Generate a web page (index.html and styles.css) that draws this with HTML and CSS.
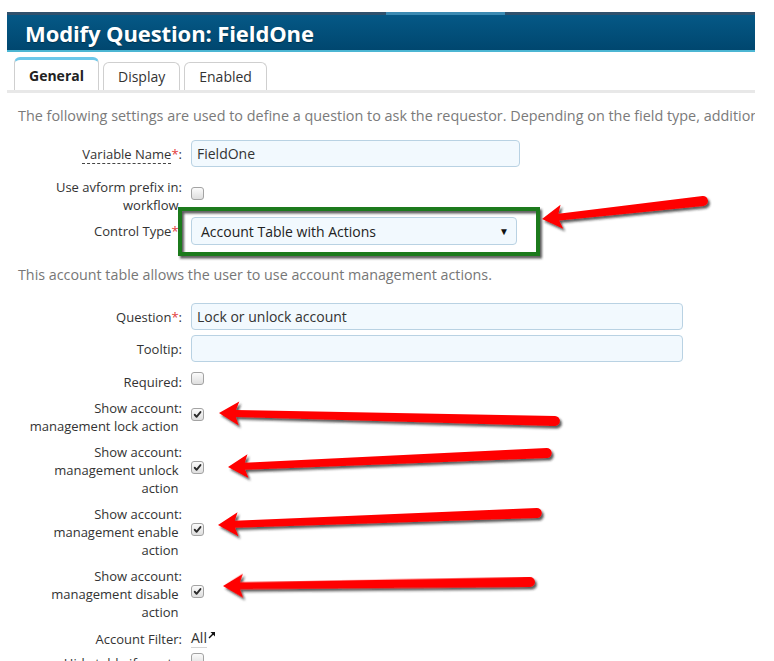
FILE: index.html
```html
<!DOCTYPE html>
<html lang="en">
<head>
<meta charset="utf-8">
<title>Modify Question: FieldOne</title>
<link rel="stylesheet" href="styles.css">
</head>
<body>
<div class="page">
  <div class="header"><h1 class="title">Modify Question: FieldOne</h1></div>
  <div class="tabs">
    <div class="tab tab-active">General</div>
    <div class="tab">Display</div>
    <div class="tab">Enabled</div>
  </div>
  <div class="content">
    <p class="intro">The following settings are used to define a question to ask the requestor. Depending on the field type, additional settings may be available.</p>
    <div class="form">
      <div class="row">
        <label class="lbl"><span class="lbl-text"><span class="dashed">Variable Name</span><span class="req">*</span></span><span class="colon">:</span></label>
        <div class="input input-short">FieldOne</div>
      </div>
      <div class="row row-avform">
        <label class="lbl"><span class="lbl-text">Use avform prefix in workflow</span><span class="colon">:</span></label>
        <span class="cb"></span>
      </div>
      <div class="row row-control">
        <label class="lbl"><span class="lbl-text">Control Type<span class="req">*</span></span><span class="colon">:</span></label>
        <div class="select"><span>Account Table with Actions</span><span class="caret">&#9660;</span></div>
      </div>
      <p class="desc">This account table allows the user to use account management actions.</p>
      <div class="row row-question">
        <label class="lbl"><span class="lbl-text">Question<span class="req">*</span></span><span class="colon">:</span></label>
        <div class="input input-long">Lock or unlock account</div>
      </div>
      <div class="row row-tooltip">
        <label class="lbl"><span class="lbl-text">Tooltip</span><span class="colon">:</span></label>
        <div class="input input-long"></div>
      </div>
      <div class="row row-required">
        <label class="lbl"><span class="lbl-text">Required</span><span class="colon">:</span></label>
        <span class="cb"></span>
      </div>
      <div class="row">
        <label class="lbl"><span class="lbl-text">Show account management lock action</span><span class="colon">:</span></label>
        <span class="cb cb-on"><svg viewBox="0 0 13 13" width="13" height="13"><path d="M3.2 6.8 L5.4 9.2 L10 3.6" fill="none" stroke="#2b2b2b" stroke-width="2.2" stroke-linecap="round" stroke-linejoin="round"/></svg></span>
      </div>
      <div class="row">
        <label class="lbl"><span class="lbl-text">Show account management unlock action</span><span class="colon">:</span></label>
        <span class="cb cb-on"><svg viewBox="0 0 13 13" width="13" height="13"><path d="M3.2 6.8 L5.4 9.2 L10 3.6" fill="none" stroke="#2b2b2b" stroke-width="2.2" stroke-linecap="round" stroke-linejoin="round"/></svg></span>
      </div>
      <div class="row">
        <label class="lbl"><span class="lbl-text">Show account management enable action</span><span class="colon">:</span></label>
        <span class="cb cb-on"><svg viewBox="0 0 13 13" width="13" height="13"><path d="M3.2 6.8 L5.4 9.2 L10 3.6" fill="none" stroke="#2b2b2b" stroke-width="2.2" stroke-linecap="round" stroke-linejoin="round"/></svg></span>
      </div>
      <div class="row">
        <label class="lbl"><span class="lbl-text">Show account management disable action</span><span class="colon">:</span></label>
        <span class="cb cb-on"><svg viewBox="0 0 13 13" width="13" height="13"><path d="M3.2 6.8 L5.4 9.2 L10 3.6" fill="none" stroke="#2b2b2b" stroke-width="2.2" stroke-linecap="round" stroke-linejoin="round"/></svg></span>
      </div>
      <div class="row">
        <label class="lbl"><span class="lbl-text">Account Filter</span><span class="colon">:</span></label>
        <span class="filter"><span class="link">All</span><svg class="ext" viewBox="0 0 8 8" width="8" height="8"><path d="M1 7 L6 2" stroke="#111" stroke-width="1.5"/><path d="M2.5 1 H7 V5.5 Z" fill="#111"/></svg></span>
      </div>
      <div class="row row-hide">
        <label class="lbl"><span class="lbl-text">Hide table if empty</span><span class="colon">:</span></label>
        <span class="cb"></span>
      </div>
    </div>
  </div>
</div>
<svg class="overlay" width="774" height="661" viewBox="0 0 774 661">
  <defs>
    <filter id="sh" x="-20%" y="-60%" width="140%" height="220%">
      <feDropShadow dx="2" dy="2.5" stdDeviation="1.3" flood-color="#222" flood-opacity="0.75"/>
    </filter>
  </defs>
  <rect x="180" y="209" width="358" height="45" fill="none" stroke="#1c7a1c" stroke-width="4" filter="url(#sh)"/>
  <g fill="#ff0000" filter="url(#sh)">
    <path transform="translate(542 219) rotate(-6.38)" d="M0,0 L20,-12 L17,-3.5 L162,-5 A5,5 0 0 1 162,5 L17,3.5 L20,12 Z"/>
    <path transform="translate(219 413) rotate(1.36)" d="M0,0 L20,-12 L17,-3.5 L336,-5 A5,5 0 0 1 336,5 L17,3.5 L20,12 Z"/>
    <path transform="translate(228 467) rotate(-2.51)" d="M0,0 L20,-12 L17,-3.5 L319,-5 A5,5 0 0 1 319,5 L17,3.5 L20,12 Z"/>
    <path transform="translate(218 525) rotate(-2.15)" d="M0,0 L20,-12 L17,-3.5 L319,-5 A5,5 0 0 1 319,5 L17,3.5 L20,12 Z"/>
    <path transform="translate(223 586) rotate(-0.75)" d="M0,0 L20,-12 L17,-3.5 L307,-5 A5,5 0 0 1 307,5 L17,3.5 L20,12 Z"/>
  </g>
</svg>
</body>
</html>
```

FILE: styles.css
```css
html {
  overflow: hidden;
}
body {
  margin: 0;
  background: #ffffff;
  font-family: "Open Sans", "Noto Sans", "Liberation Sans", sans-serif;
  font-size: 13px;
  color: #333333;
  position: relative;
  width: 774px;
  height: 661px;
  overflow: hidden;
}
.page {
  margin: 12px 0 0 7px;
  width: 748px;
}
.header {
  position: relative;
  height: 35px;
  border-top: 3px solid #30516d;
  border-bottom: 2px solid #4cb6d3;
  background: linear-gradient(#055886, #00476f);
  display: flex;
  align-items: center;
  padding-left: 18px;
}
.header::before {
  content: "";
  position: absolute;
  left: 379px;
  top: -3px;
  width: 119px;
  height: 3px;
  background: #3c8ab2;
}
.title {
  margin: 0;
  font-size: 22px;
  font-weight: 700;
  color: #ffffff;
  text-shadow: 0 1px 1px rgba(0, 0, 0, 0.35);
  letter-spacing: -0.1px;
}
.tabs {
  display: flex;
  align-items: flex-end;
  gap: 4px;
  padding-left: 7px;
  margin-top: 5px;
  border-bottom: 3px solid #e8e8e8;
}
.tab {
  height: 27px;
  padding: 0 14px;
  border: 1px solid #cfcfcf;
  border-bottom: none;
  border-radius: 6px 6px 0 0;
  background: #ffffff;
  display: flex;
  align-items: center;
  font-size: 14px;
  color: #333333;
}
.tab-active {
  height: 30px;
  border-top: 3px solid #6cc8ea;
  font-weight: 700;
  color: #222222;
}
.content {
  padding-left: 11px;
  overflow: hidden;
}
.intro {
  margin: 14px 0 0 0;
  font-size: 14.4px;
  line-height: 18px;
  white-space: nowrap;
  color: #7a7a7a;
}
.form {
  display: flex;
  flex-direction: column;
  gap: 8px;
  margin-top: 15px;
}
.row {
  display: flex;
  align-items: center;
  gap: 6px;
}
.row-avform {
  margin-top: 3px;
}
.row-control {
  margin-top: -5px;
}
.row-question {
  margin-top: 11px;
}
.row-tooltip {
  margin-top: -3px;
}
.row-required {
  margin-top: 2px;
}
.row-hide {
  margin-top: -3px;
}
.lbl {
  width: 167px;
  flex: none;
  display: flex;
  justify-content: flex-end;
  align-items: flex-start;
  line-height: 18px;
  color: #333333;
}
.lbl-text {
  text-align: right;
}
.colon {
  flex: none;
  padding-right: 3px;
}
.dashed {
  border-bottom: 1px dashed #444444;
}
.req {
  color: #e23b3b;
}
.input {
  height: 25px;
  border: 1px solid #b9d2e3;
  border-radius: 4px;
  background: #f2f9fe;
  display: flex;
  align-items: center;
  padding-left: 5px;
  box-sizing: content-box;
  font-size: 14px;
  color: #333333;
}
.input-short {
  width: 322px;
}
.input-long {
  width: 485px;
}
.select {
  width: 308px;
  height: 26px;
  border: 1px solid #b9d2e3;
  border-radius: 4px;
  background: #f2f9fe;
  display: flex;
  align-items: center;
  justify-content: space-between;
  padding: 0 7px 0 9px;
  font-size: 14px;
  color: #222222;
}
.caret {
  font-size: 10px;
  color: #111111;
}
.desc {
  margin: 13px 0 0 0;
  font-size: 14.3px;
  line-height: 18px;
  color: #777777;
}
.cb {
  width: 11px;
  height: 11px;
  flex: none;
  border: 1px solid #a3a3a3;
  border-radius: 3px;
  background: linear-gradient(#fbfbfb, #dedede);
  margin-bottom: 6px;
  display: flex;
  align-items: center;
  justify-content: center;
}
.cb-on svg {
  width: 11px;
  height: 11px;
}
.filter {
  display: flex;
  align-items: flex-start;
  line-height: 18px;
  font-size: 14px;
}
.link {
  border-bottom: 1px solid #d5d5d5;
  color: #333333;
}
.ext {
  margin-left: 1px;
  margin-top: 2px;
}
.overlay {
  position: absolute;
  left: 0;
  top: 0;
  pointer-events: none;
}
```
